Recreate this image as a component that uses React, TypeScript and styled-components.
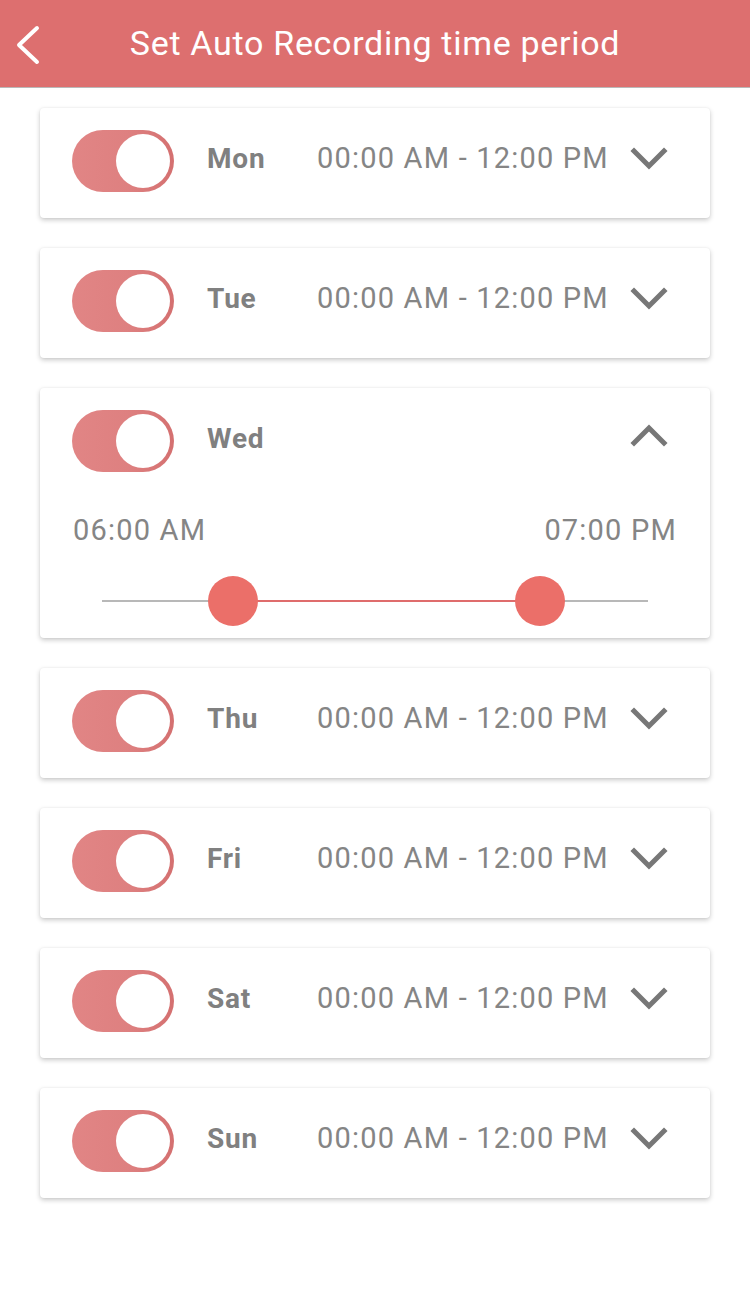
import React, { FC, useState } from "react";
import styled, { createGlobalStyle } from "styled-components";

const GlobalStyle = createGlobalStyle`
  html, body {
    margin: 0;
    padding: 0;
    background: #fff;
  }
  body {
    font-family: Roboto, "Noto Sans", "Liberation Sans", sans-serif;
  }
`;

const Page = styled.div`
  width: 750px;
  min-height: 1294px;
  background: #fff;
`;

const Header = styled.div`
  position: relative;
  height: 87px;
  background: #dd6f6f;
  border-bottom: 1px solid #b9b9b9;
  display: flex;
  align-items: center;
  justify-content: center;
`;

const BackButton = styled.div`
  position: absolute;
  left: 14px;
  top: 24px;
  width: 30px;
  height: 42px;
`;

const Title = styled.h1`
  margin: 0 0 2px;
  color: #fff;
  font-size: 34px;
  font-weight: 400;
  letter-spacing: 0.7px;
`;

const List = styled.div`
  display: flex;
  flex-direction: column;
  gap: 30px;
  padding: 20px 40px 40px;
`;

const Card = styled.div`
  background: #fff;
  border-radius: 4px;
  box-shadow: 0 2px 5px rgba(0, 0, 0, 0.22), 0 0 2px rgba(0, 0, 0, 0.06);
`;

const Row = styled.div`
  height: 106px;
  display: flex;
  align-items: center;
  padding: 0 42px 4px 32px;
`;

const Toggle = styled.div<{ $on: boolean }>`
  position: relative;
  width: 102px;
  height: 62px;
  border-radius: 31px;
  background: ${(p) => (p.$on ? "linear-gradient(90deg, #e18585 0%, #de8080 55%, #d47070 100%)" : "#ccc")};
  flex-shrink: 0;
`;

const Knob = styled.div<{ $on: boolean }>`
  position: absolute;
  top: 4px;
  ${(p) => (p.$on ? "right: 4px;" : "left: 4px;")}
  width: 54px;
  height: 54px;
  border-radius: 50%;
  background: #fff;
`;

const DayLabel = styled.div`
  width: 110px;
  margin: 0 0 6px 33px;
  font-size: 28px;
  font-weight: 700;
  color: #808080;
  letter-spacing: 0.8px;
`;

const Range = styled.div`
  flex: 1;
  margin-bottom: 6px;
  font-size: 29px;
  font-weight: 400;
  color: #858585;
  letter-spacing: 1.2px;
  white-space: nowrap;
`;

const Chevron = styled.svg<{ $up?: boolean }>`
  width: 38px;
  height: 24px;
  margin-left: auto;
  margin-top: ${(p) => (p.$up ? "-12px" : "-4px")};
  flex-shrink: 0;
`;

const Body = styled.div`
  padding: 15px 33px 12px;
`;

const TimesRow = styled.div`
  display: flex;
  justify-content: space-between;
  height: 34px;
  line-height: 34px;
  font-size: 29px;
  color: #858585;
  letter-spacing: 1.2px;
`;

const SliderBox = styled.div`
  margin: 29px 29px 0;
  height: 50px;
  position: relative;
  display: flex;
  align-items: center;
`;

const Track = styled.div`
  width: 100%;
  height: 2px;
  background: #b8b8b8;
`;

const Fill = styled.div`
  position: absolute;
  top: 24px;
  height: 2px;
  background: #df6c6c;
`;

const Thumb = styled.div`
  position: absolute;
  top: 0;
  width: 50px;
  height: 50px;
  margin-left: -25px;
  border-radius: 50%;
  background: #eb6f69;
`;

type Day = {
  name: string;
  on: boolean;
  from: string;
  to: string;
  start?: number;
  end?: number;
};

const days: Day[] = [
  { name: "Mon", on: true, from: "00:00 AM", to: "12:00 PM" },
  { name: "Tue", on: true, from: "00:00 AM", to: "12:00 PM" },
  { name: "Wed", on: true, from: "06:00 AM", to: "07:00 PM", start: 24, end: 80.2 },
  { name: "Thu", on: true, from: "00:00 AM", to: "12:00 PM" },
  { name: "Fri", on: true, from: "00:00 AM", to: "12:00 PM" },
  { name: "Sat", on: true, from: "00:00 AM", to: "12:00 PM" },
  { name: "Sun", on: true, from: "00:00 AM", to: "12:00 PM" },
];

const ChevronIcon: FC<{ up?: boolean }> = ({ up }) => (
  <Chevron $up={up} viewBox="0 0 38 24">
    <polyline
      points={up ? "4,20 19,5 34,20" : "4,4 19,19 34,4"}
      fill="none"
      stroke="#777"
      strokeWidth="5"
      strokeLinecap="square"
    />
  </Chevron>
);

const DayCard: FC<{ day: Day; open: boolean; onToggle: () => void }> = ({ day, open, onToggle }) => (
  <Card>
    <Row onClick={onToggle}>
      <Toggle $on={day.on}>
        <Knob $on={day.on} />
      </Toggle>
      <DayLabel>{day.name}</DayLabel>
      {!open && <Range>{`${day.from} - ${day.to}`}</Range>}
      <ChevronIcon up={open} />
    </Row>
    {open && (
      <Body>
        <TimesRow>
          <span>{day.from}</span>
          <span>{day.to}</span>
        </TimesRow>
        <SliderBox>
          <Track />
          <Fill style={{ left: `${day.start}%`, width: `${(day.end ?? 0) - (day.start ?? 0)}%` }} />
          <Thumb style={{ left: `${day.start}%` }} />
          <Thumb style={{ left: `${day.end}%` }} />
        </SliderBox>
      </Body>
    )}
  </Card>
);

const App: FC = () => {
  const [openDay, setOpenDay] = useState<string>("Wed");

  return (
    <Page>
      <GlobalStyle />
      <Header>
        <BackButton>
          <svg width="30" height="42" viewBox="0 0 30 42">
            <polyline
              points="23,4 5,21 23,38"
              fill="none"
              stroke="#fff"
              strokeWidth="4"
              strokeLinecap="round"
              strokeLinejoin="round"
            />
          </svg>
        </BackButton>
        <Title>Set Auto Recording time period</Title>
      </Header>
      <List>
        {days.map((d) => (
          <DayCard
            key={d.name}
            day={d}
            open={openDay === d.name}
            onToggle={() => setOpenDay(openDay === d.name ? "" : d.name)}
          />
        ))}
      </List>
    </Page>
  );
};

export default App;
